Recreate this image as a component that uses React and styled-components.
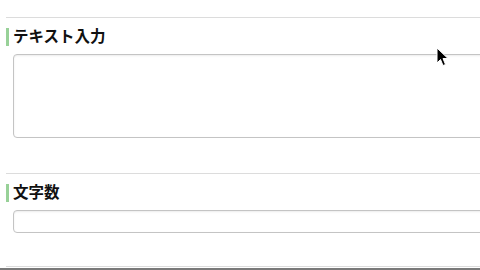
import React from "react";
import styled, { createGlobalStyle } from "styled-components";

const Global = createGlobalStyle`
  html, body { margin: 0; padding: 0; background: #fff; overflow: hidden; }
  body { width: 480px; height: 270px; font-family: "Noto Sans CJK JP", "Noto Sans", sans-serif; }
`;

const Page = styled.div`
  position: relative;
  width: 480px;
  height: 270px;
  overflow: hidden;
  padding-top: 17px;
  box-sizing: border-box;
`;

const Section = styled.section`
  margin-left: 6px;
  border-top: 1px solid #dcdcdc;
  padding-top: 10px;
  padding-bottom: ${(p) => p.$bottom}px;
`;

const Heading = styled.h2`
  margin: 0;
  height: 18px;
  border-left: 3px solid #98d198;
  padding-left: 4px;
  font-size: 15.5px;
  font-weight: 700;
  line-height: 15px;
  color: #111;
  white-space: nowrap;
`;

const FieldWrap = styled.div`
  margin-top: 8px;
  margin-left: 7px;
`;

const TextArea = styled.textarea`
  display: block;
  width: 620px;
  height: 84px;
  box-sizing: border-box;
  border: 1px solid #c4c4c4;
  border-radius: 4px;
  box-shadow: inset 0 1px 2px rgba(0, 0, 0, 0.08);
  resize: none;
  margin: 0;
  outline: none;
`;

const Input = styled.input`
  display: block;
  width: 620px;
  height: 23px;
  box-sizing: border-box;
  border: 1px solid #c4c4c4;
  border-radius: 4px;
  box-shadow: inset 0 1px 2px rgba(0, 0, 0, 0.08);
  margin: 0;
  outline: none;
`;

const BottomBar = styled.div`
  position: absolute;
  left: 0;
  right: 0;
  bottom: 0;
  height: 2px;
  background: #7a7a7a;
`;

const Cursor = styled.svg`
  position: absolute;
  left: 436px;
  top: 47px;
`;

export default function App() {
  return (
    <>
      <Global />
      <Page>
        <Section $bottom={35}>
          <Heading>テキスト入力</Heading>
          <FieldWrap>
            <TextArea />
          </FieldWrap>
        </Section>
        <Section $bottom={33}>
          <Heading>文字数</Heading>
          <FieldWrap>
            <Input />
          </FieldWrap>
        </Section>
        <Section $bottom={0} />
        <BottomBar />
        <Cursor width="14" height="22" viewBox="0 0 14 22">
          <path
            d="M1 1 L1 16 L4.5 12.5 L7 18.5 L9.5 17.5 L7 11.5 L12 11.5 Z"
            fill="#000"
            stroke="#fff"
            strokeWidth="1"
            strokeLinejoin="round"
          />
        </Cursor>
      </Page>
    </>
  );
}
